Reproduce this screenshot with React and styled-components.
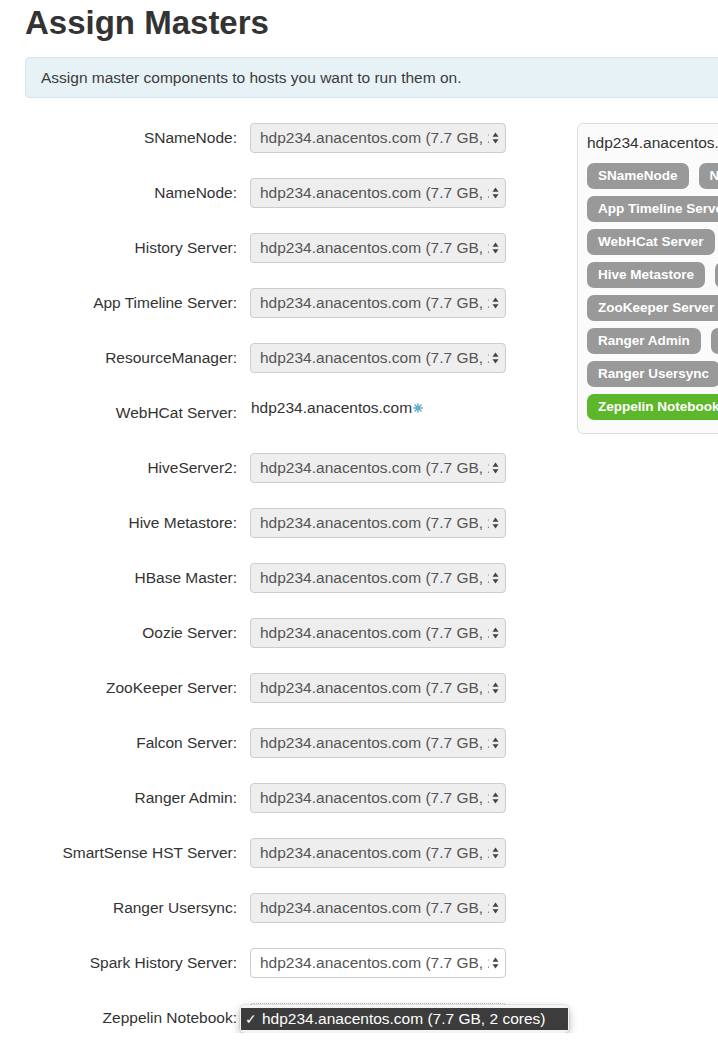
import React from 'react';
import styled, { createGlobalStyle } from 'styled-components';

const GlobalStyle = createGlobalStyle`
  html, body {
    margin: 0;
    padding: 0;
    background: #fff;
    overflow: hidden;
  }
  body {
    font-family: "Liberation Sans", Arial, Helvetica, sans-serif;
    color: #333;
  }
`;

const Page = styled.div`
  width: 1000px;
  padding: 0 0 0 25px;
`;

const Title = styled.h2`
  margin: 0;
  padding-top: 3px;
  height: 54px;
  font-size: 33px;
  font-weight: bold;
  line-height: 40px;
  color: #333;
`;

const Alert = styled.div`
  box-sizing: border-box;
  width: 760px;
  height: 41px;
  padding: 0 15px;
  background: #e7f2f7;
  border: 1px solid #d3e5ed;
  border-radius: 4px;
  font-size: 15.5px;
  line-height: 39px;
  color: #3b3b3b;
`;

const Body = styled.div`
  display: flex;
  align-items: flex-start;
  gap: 71px;
  margin-top: 25px;
`;

const Form = styled.div`
  display: flex;
  flex-direction: column;
  gap: 25px;
  width: 481px;
`;

const Row = styled.div`
  display: flex;
  align-items: ${p => (p.$static ? 'flex-start' : 'center')};
  gap: 13px;
  height: 30px;
`;

const Label = styled.div`
  width: 212px;
  text-align: right;
  font-size: 15.5px;
  line-height: 30px;
  color: #333;
  white-space: nowrap;
`;

const Select = styled.div`
  position: relative;
  box-sizing: border-box;
  display: flex;
  align-items: center;
  width: 256px;
  height: 30px;
  padding: 0 6px 0 9px;
  border: 1px solid ${p => (p.$dotted ? '#bbb' : '#ccc')};
  border-top-style: ${p => (p.$dotted ? 'dotted' : 'solid')};
  border-radius: 4px;
  background: ${p => (p.$enabled ? '#fff' : '#eee')};
  font-size: 15.5px;
  color: #555;
`;

const SelectText = styled.span`
  flex: 1;
  overflow: hidden;
  white-space: nowrap;
`;

const Arrows = styled.svg`
  flex: none;
  margin-left: 3px;
`;

const StaticValue = styled.div`
  display: flex;
  align-items: center;
  padding-left: 1px;
  font-size: 15.5px;
  line-height: 20px;
  color: #333;
`;

const Menu = styled.div`
  position: absolute;
  left: -11px;
  top: 1px;
  box-sizing: border-box;
  width: 329px;
  padding: 3px 1px;
  background: #f4f4f4;
  border-radius: 5px;
  box-shadow: 0 3px 10px rgba(0, 0, 0, 0.28), 0 0 0 1px rgba(0, 0, 0, 0.06);
  z-index: 5;
`;

const MenuItem = styled.div`
  display: flex;
  align-items: center;
  height: 22px;
  padding-left: 4px;
  background: #3c3c3c;
  color: #fff;
  font-size: 15.5px;
  white-space: nowrap;
`;

const Check = styled.span`
  width: 17px;
  font-size: 14px;
`;

const HostPanel = styled.div`
  box-sizing: border-box;
  width: 330px;
  padding: 9px 9px 13px;
  background: #fbfbfb;
  border: 1px solid #ddd;
  border-radius: 6px;
`;

const HostName = styled.div`
  font-size: 15.5px;
  line-height: 20px;
  color: #333;
  margin-bottom: 10px;
`;

const BadgeRows = styled.div`
  display: flex;
  flex-direction: column;
  gap: 7px;
`;

const BadgeRow = styled.div`
  display: flex;
  gap: 10px;
  white-space: nowrap;
`;

const Badge = styled.span`
  box-sizing: border-box;
  height: 26px;
  padding: 0 11px;
  border-radius: 7px;
  background: ${p => (p.$active ? '#5db72a' : '#999')};
  color: #fff;
  font-size: 13.5px;
  font-weight: bold;
  line-height: 26px;
`;

const host = 'hdp234.anacentos.com (7.7 GB, 2 cores)';

const rows = [
  'SNameNode',
  'NameNode',
  'History Server',
  'App Timeline Server',
  'ResourceManager',
  'WebHCat Server',
  'HiveServer2',
  'Hive Metastore',
  'HBase Master',
  'Oozie Server',
  'ZooKeeper Server',
  'Falcon Server',
  'Ranger Admin',
  'SmartSense HST Server',
  'Ranger Usersync',
  'Spark History Server',
  'Zeppelin Notebook',
];

const badgeRows = [
  ['SNameNode', 'NameNode', 'History Server'],
  ['App Timeline Server', 'ResourceManager'],
  ['WebHCat Server', 'HiveServer2'],
  ['Hive Metastore', 'HBase Master'],
  ['ZooKeeper Server', 'Falcon Server'],
  ['Ranger Admin', 'SmartSense HST Server'],
  ['Ranger Usersync', 'Spark History Server'],
  ['Zeppelin Notebook'],
];

const SelectArrows = () => (
  <Arrows width="7" height="12" viewBox="0 0 7 12">
    <path d="M3.5 0.5 L6.5 4.8 L0.5 4.8 Z" fill="#444" />
    <path d="M3.5 11.5 L6.5 7.2 L0.5 7.2 Z" fill="#444" />
  </Arrows>
);

const Asterisk = () => (
  <svg width="10" height="10" viewBox="0 0 10 10" style={{ marginLeft: 1 }}>
    <g stroke="#5aa9c9" strokeWidth="1.4" strokeLinecap="round">
      <line x1="5" y1="0.8" x2="5" y2="9.2" />
      <line x1="0.8" y1="5" x2="9.2" y2="5" />
      <line x1="2" y1="2" x2="8" y2="8" />
      <line x1="8" y1="2" x2="2" y2="8" />
    </g>
  </svg>
);

const App = () => {
  return (
    <>
      <GlobalStyle />
      <Page>
        <Title>Assign Masters</Title>
        <Alert>Assign master components to hosts you want to run them on.</Alert>
        <Body>
          <Form>
            {rows.map(name => {
              if (name === 'WebHCat Server') {
                return (
                  <Row key={name} $static>
                    <Label>{name}:</Label>
                    <StaticValue>
                      hdp234.anacentos.com
                      <Asterisk />
                    </StaticValue>
                  </Row>
                );
              }
              const open = name === 'Zeppelin Notebook';
              return (
                <Row key={name}>
                  <Label>{name}:</Label>
                  <Select $enabled={name === 'Spark History Server' || open} $dotted={open}>
                    <SelectText>{host}</SelectText>
                    <SelectArrows />
                    {open && (
                      <Menu>
                        <MenuItem>
                          <Check>✓</Check>
                          {host}
                        </MenuItem>
                      </Menu>
                    )}
                  </Select>
                </Row>
              );
            })}
          </Form>
          <HostPanel>
            <HostName>hdp234.anacentos.com</HostName>
            <BadgeRows>
              {badgeRows.map((r, i) => (
                <BadgeRow key={i}>
                  {r.map(b => (
                    <Badge key={b} $active={b === 'Zeppelin Notebook'}>
                      {b}
                    </Badge>
                  ))}
                </BadgeRow>
              ))}
            </BadgeRows>
          </HostPanel>
        </Body>
      </Page>
    </>
  );
};

export default App;
